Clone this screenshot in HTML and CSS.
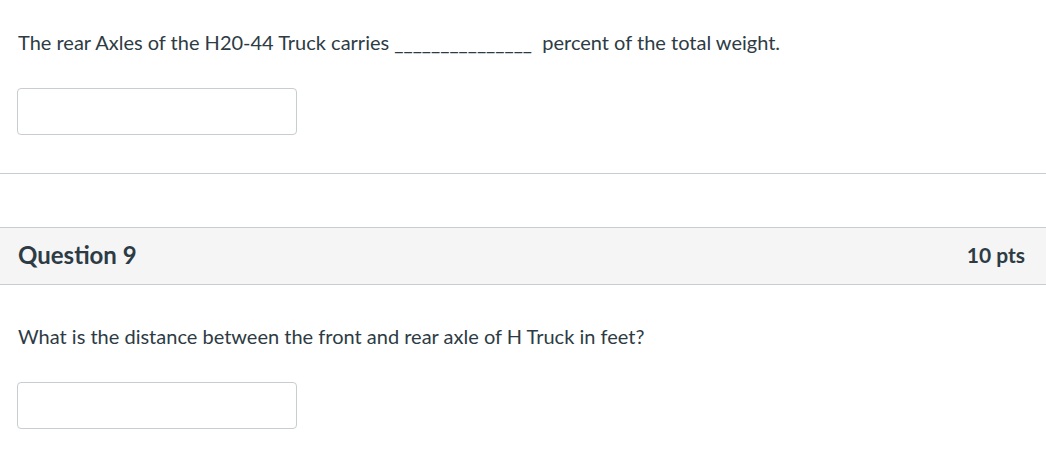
FILE: index.html
```html
<!DOCTYPE html>
<html>
<head>
<meta charset="utf-8">
<link rel="stylesheet" href="styles.css">
</head>
<body>
<div class="question">
  <div class="qtext">The rear Axles of the H20-44 Truck carries <span class="blank">_______________</span>&nbsp; percent of the total weight.</div>
  <div class="answer"><input class="field" type="text"></div>
</div>
<hr class="sep">
<div class="question">
  <div class="header">
    <span class="qname">Question 9</span>
    <span class="pts">10 pts</span>
  </div>
  <div class="qtext qtext2">What is the distance between the front and rear axle of H Truck in feet?</div>
  <div class="answer"><input class="field" type="text"></div>
</div>
</body>
</html>
```
FILE: styles.css
```css
html, body {
  margin: 0;
  padding: 0;
  background: #fff;
}
body {
  font-family: Lato, "Open Sans", sans-serif;
  color: #2d3b45;
  width: 1046px;
  height: 453px;
  overflow: hidden;
}
.qtext {
  font-size: 20px;
  line-height: 30px;
  padding: 27px 18px 0;
}
.answer {
  padding: 31px 17px 0;
}
.field {
  display: block;
  box-sizing: border-box;
  width: 280px;
  height: 47px;
  margin: 0;
  border: 1px solid #c7cdd1;
  border-radius: 4px;
  background: #fff;
}
.sep {
  margin: 38px 0 0;
  border: 0;
  border-top: 1px solid #c7cdd1;
  height: 0;
}
.header {
  margin-top: 53px;
  display: flex;
  justify-content: space-between;
  align-items: center;
  box-sizing: border-box;
  background: #f5f5f5;
  border-top: 1px solid #c7cdd1;
  border-bottom: 1px solid #c7cdd1;
  height: 58px;
  padding: 0 21px 3px 18px;
  font-weight: bold;
  color: #2d3b45;
}
.qname {
  font-size: 24px;
}
.pts {
  font-size: 21px;
}
.qtext2 {
  padding-top: 36px;
}
```
